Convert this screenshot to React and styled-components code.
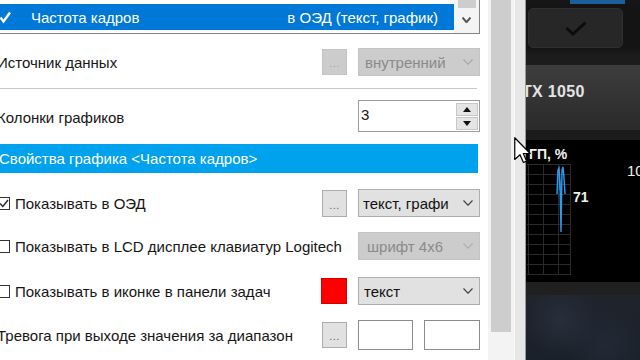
import React from 'react';
import styled, { createGlobalStyle } from 'styled-components';

const Global = createGlobalStyle`
  html, body { margin: 0; padding: 0; width: 640px; height: 360px; overflow: hidden; background: #fff; }
  #root { width: 640px; height: 360px; }
  * { box-sizing: border-box; }
`;

const Screen = styled.div`
  position: relative;
  display: flex;
  width: 640px;
  height: 360px;
  overflow: hidden;
  font-family: "Liberation Sans", Arial, sans-serif;
  font-size: 15px;
  color: #161616;
`;

const Dialog = styled.div`
  display: flex;
  flex: none;
  width: 526px;
  height: 360px;
`;

const Content = styled.div`
  display: flex;
  flex-direction: column;
  width: 488px;
  background: #fff;
  overflow: hidden;
`;

const ScrollTrack = styled.div`
  width: 26px;
  background: #f3f3f3;
  padding: 0 3px;
`;

const ScrollThumb = styled.div`
  height: 332px;
  background: #cdcdcd;
`;

const Frame = styled.div`
  width: 12px;
  background: #e6e6e6;
  border-left: 1px solid #f7f7f7;
  border-right: 1px solid #9a9a9a;
`;

/* list box */
const ListBox = styled.div`
  display: flex;
  flex: none;
  width: 480px;
  height: 34px;
  border-right: 1px solid #828282;
  border-bottom: 1px solid #828282;
`;

const ListRows = styled.div`
  flex: 1;
  padding-top: 4px;
`;

const ListItem = styled.div`
  display: flex;
  align-items: center;
  height: 26px;
  background: #0078d7;
  color: #fff;
  padding-right: 16px;
  white-space: nowrap;
`;

const ListName = styled.span`
  margin-left: 20px;
  flex: 1;
`;

const ListScroll = styled.div`
  display: flex;
  flex-direction: column;
  align-items: center;
  width: 25px;
  background: #f4f4f4;
`;

const ListThumb = styled.div`
  width: 18px;
  height: 8px;
  background: #cdcdcd;
  margin-bottom: 9px;
`;

/* rows */
const Row = styled.div`
  display: grid;
  grid-template-columns: minmax(0, 1fr) 25px 122px;
  column-gap: 11px;
  align-items: center;
  flex: none;
  width: 480px;
  height: ${p => p.$h}px;
  margin-top: ${p => p.$mt}px;
`;

const Label = styled.div`
  display: flex;
  align-items: center;
  white-space: nowrap;
  overflow: visible;
  margin-left: ${p => p.$ml ?? -3}px;
  padding-top: ${p => p.$pt ?? 0}px;
`;

const Check = styled.span`
  display: inline-flex;
  align-items: center;
  justify-content: center;
  width: 13px;
  height: 13px;
  border: 1px solid #333;
  background: #fff;
  margin-right: 5px;
  flex: none;
`;

const DotsButton = styled.div`
  display: flex;
  align-items: flex-end;
  justify-content: center;
  height: ${p => p.$h || 27}px;
  background: ${p => (p.$disabled ? '#cccccc' : '#e1e1e1')};
  border: 1px solid ${p => (p.$disabled ? '#c4c4c4' : '#adadad')};
  color: ${p => (p.$disabled ? '#a8a8a8' : '#666')};
  font-size: 11px;
  padding-bottom: 5px;
  letter-spacing: 0.5px;
`;

const ColorBox = styled.div`
  height: 26px;
  margin-left: -1px;
  background: #ff0000;
  border: 1px solid #d40000;
`;

const Combo = styled.div`
  display: flex;
  align-items: center;
  height: 28px;
  background: ${p => (p.$disabled ? '#cccccc' : '#e1e1e1')};
  border: 1px solid ${p => (p.$disabled ? '#c4c4c4' : '#adadad')};
  color: ${p => (p.$disabled ? '#8a8a8a' : '#111')};
  padding-left: ${p => p.$pl ?? 4}px;
  padding-right: 6px;
`;

const ComboText = styled.span`
  flex: 1;
  min-width: 0;
  overflow: hidden;
  white-space: nowrap;
  margin-right: 14px;
`;

const Spinner = styled.div`
  display: flex;
  height: 32px;
  border: 1px solid #9c9c9c;
  background: #fff;
  padding: 2px 1px 1px 2px;
`;

const SpinValue = styled.span`
  flex: 1;
  padding-top: 3px;
  font-size: 15px;
`;

const SpinButtons = styled.div`
  display: flex;
  flex-direction: column;
  gap: 1px;
  width: 22px;
`;

const SpinButton = styled.div`
  display: flex;
  align-items: center;
  justify-content: center;
  flex: 1;
  background: #e5e5e5;
  border: 1px solid #c6c6c6;
`;

const Separator = styled.div`
  flex: none;
  width: 477px;
  height: 1px;
  margin-top: 12px;
  background: #c9c9c9;
`;

const Header = styled.div`
  display: flex;
  align-items: center;
  flex: none;
  width: 478px;
  height: 29px;
  margin-top: 12px;
  background: #00a2ed;
  color: #fff;
  white-space: nowrap;
  text-indent: -1px;
`;

const Edits = styled.div`
  display: flex;
  gap: 11px;
  height: 30px;
`;

const Edit = styled.div`
  flex: ${p => p.$w};
  border: 1px solid #8c8c8c;
  background: #fff;
`;

/* right app skin */
const AppSkin = styled.div`
  display: flex;
  flex-direction: column;
  flex: 1;
  background: #111;
  overflow: hidden;
`;

const TopStrip = styled.div`
  height: 4px;
  flex: none;
  background: linear-gradient(to right, #161616 0 44px, #1d5f9c 44px 99px, #161616 99px);
`;

const ButtonWrap = styled.div`
  flex: none;
  padding: 4px 17px 17px 2px;
  background: linear-gradient(#141414 0 44px, #1c1c1c 51px);
`;

const SkinButton = styled.div`
  display: flex;
  align-items: center;
  justify-content: center;
  height: 40px;
  border-radius: 5px;
  background: #272727;
  border: 1px solid #2f2f2f;
`;

const GpuBar = styled.div`
  flex: none;
  height: 65px;
  background: linear-gradient(#3d3d3d, #2a2a2a);
  padding-top: 18px;
  color: #e4e4e4;
  font-weight: 700;
  font-size: 16px;
  letter-spacing: 0.3px;
  white-space: nowrap;
  text-indent: -4px;
`;

const Band = styled.div`
  flex: none;
  height: ${p => p.$h}px;
  background: ${p => p.$bg};
`;

const Graph = styled.div`
  position: relative;
  flex: none;
  height: 142px;
  background: #000;
  color: #f0f0f0;
  font-weight: 700;
  font-size: 14px;
`;

const GraphLabel = styled.span`
  position: absolute;
  left: ${p => p.$x}px;
  top: ${p => p.$y}px;
  font-size: ${p => p.$fs || 14}px;
  font-weight: ${p => p.$fw || 700};
  white-space: nowrap;
`;

const GraphSvg = styled.svg`
  position: absolute;
  left: 0;
  top: 24px;
`;

const Bottom = styled.div`
  flex: 1;
  background:
    radial-gradient(circle at 30% 40%, rgba(60,70,90,0.35), transparent 40%),
    radial-gradient(circle at 70% 80%, rgba(50,60,80,0.3), transparent 45%),
    linear-gradient(#1f242d, #1a2029);
`;

const Cursor = styled.svg`
  position: absolute;
  left: 514px;
  top: 137px;
`;

const Chevron = ({ color = '#444', w = 10, h = 6, sw = 1.2 }) => (
  <svg width={w} height={h} viewBox={`0 0 ${w} ${h}`}>
    <polyline points={`0.5,0.5 ${w / 2},${h - 0.8} ${w - 0.5},0.5`} fill="none" stroke={color} strokeWidth={sw} />
  </svg>
);

const Tri = ({ up }) => (
  <svg width="8" height="5" viewBox="0 0 8 5">
    <polygon points={up ? '0,5 4,0 8,5' : '0,0 8,0 4,5'} fill="#111" />
  </svg>
);

const SmallCheck = () => (
  <svg width="10" height="9" viewBox="0 0 10 9">
    <polyline points="1,4.5 3.8,7.5 9,1" fill="none" stroke="#222" strokeWidth="1.4" />
  </svg>
);

export default function App() {
  const hLines = [0, 10, 20, 30, 40, 50, 60, 70, 80, 90, 100, 110];
  const vLines = [2, 17, 32, 44];
  return (
    <>
      <Global />
      <Screen>
        <Dialog>
          <Content>
            <ListBox>
              <ListRows>
                <ListItem>
                  <svg width="11" height="13" viewBox="0 0 11 13">
                    <polyline points="0.5,6.5 3.5,10.5 10,1.5" fill="none" stroke="#fff" strokeWidth="2.4" />
                  </svg>
                  <ListName>Частота кадров</ListName>
                  <span>в ОЭД (текст, график)</span>
                </ListItem>
              </ListRows>
              <ListScroll>
                <ListThumb />
                <Chevron color="#555" w={9} h={6} sw={2} />
              </ListScroll>
            </ListBox>

            <Row $mt={14} $h={28}>
              <Label>Источник данных</Label>
              <DotsButton $disabled $h={26}>...</DotsButton>
              <Combo $disabled $pl={6}>
                <ComboText>внутренний</ComboText>
                <Chevron color="#a8a8a8" />
              </Combo>
            </Row>

            <Separator />

            <Row $mt={11} $h={32}>
              <Label $pt={3}>Колонки графиков</Label>
              <span />
              <Spinner>
                <SpinValue>3</SpinValue>
                <SpinButtons>
                  <SpinButton><Tri up /></SpinButton>
                  <SpinButton><Tri /></SpinButton>
                </SpinButtons>
              </Spinner>
            </Row>

            <Header>Свойства графика &lt;Частота кадров&gt;</Header>

            <Row $mt={16} $h={27}>
              <Label>
                <Check><SmallCheck /></Check>
                Показывать в ОЭД
              </Label>
              <DotsButton>...</DotsButton>
              <Combo>
                <ComboText>текст, график</ComboText>
                <Chevron />
              </Combo>
            </Row>

            <Row $mt={16} $h={28}>
              <Label>
                <Check />
                Показывать в LCD дисплее клавиатур Logitech
              </Label>
              <span />
              <Combo $disabled $pl={8}>
                <ComboText>шрифт 4x6</ComboText>
                <Chevron color="#b0b0b0" />
              </Combo>
            </Row>

            <Row $mt={17} $h={28}>
              <Label>
                <Check />
                Показывать в иконке в панели задач
              </Label>
              <ColorBox />
              <Combo $pl={5}>
                <ComboText>текст</ComboText>
                <Chevron />
              </Combo>
            </Row>

            <Row $mt={15} $h={30}>
              <Label>Тревога при выходе значения за диапазон</Label>
              <DotsButton $h={26}>...</DotsButton>
              <Edits>
                <Edit $w={55} />
                <Edit $w={56} />
              </Edits>
            </Row>
          </Content>
          <ScrollTrack>
            <ScrollThumb />
          </ScrollTrack>
          <Frame />
        </Dialog>

        <AppSkin>
          <TopStrip />
          <ButtonWrap>
            <SkinButton>
              <svg width="22" height="15" viewBox="0 0 22 15">
                <polyline points="1.5,7 8,13 20.5,1.5" fill="none" stroke="#0c0c0c" strokeWidth="3" />
              </svg>
            </SkinButton>
          </ButtonWrap>
          <GpuBar>TX 1050</GpuBar>
          <Band $h={10} $bg="#1b1b1b" />
          <Graph>
            <GraphSvg width="50" height="112" viewBox="0 0 50 112">
              {hLines.map(y => (
                <line key={'h' + y} x1="1" x2="45" y1={y + 0.5} y2={y + 0.5} stroke="#2a2a2a" strokeWidth="1" />
              ))}
              {vLines.map(x => (
                <line key={'v' + x} x1={x + 0.5} x2={x + 0.5} y1="0" y2="110" stroke="#2a2a2a" strokeWidth="1" />
              ))}
              <polyline points="31,30 32,6 33,4 34,18 35,68 36,6 37,3 38,14 39,30" fill="none" stroke="#2f9bf0" strokeWidth="1.4" />
              <polyline points="33,8 34,26" fill="none" stroke="#2f9bf0" strokeWidth="1.2" />
            </GraphSvg>
            <GraphLabel $x={3} $y={6}>ГП, %</GraphLabel>
            <GraphLabel $x={101} $y={22} $fs={15} $fw={400}>100</GraphLabel>
            <GraphLabel $x={47} $y={49}>71</GraphLabel>
          </Graph>
          <Band $h={13} $bg="#202020" />
          <Bottom />
        </AppSkin>

        <Cursor width="18" height="27" viewBox="0 0 12 18">
          <path d="M0.5,0.5 L0.5,15 L4,11.8 L6.3,17 L8.4,16.1 L6.2,11 L10.8,11 Z" fill="#fff" stroke="#000" strokeWidth="0.8" strokeLinejoin="round" />
        </Cursor>
      </Screen>
    </>
  );
}
